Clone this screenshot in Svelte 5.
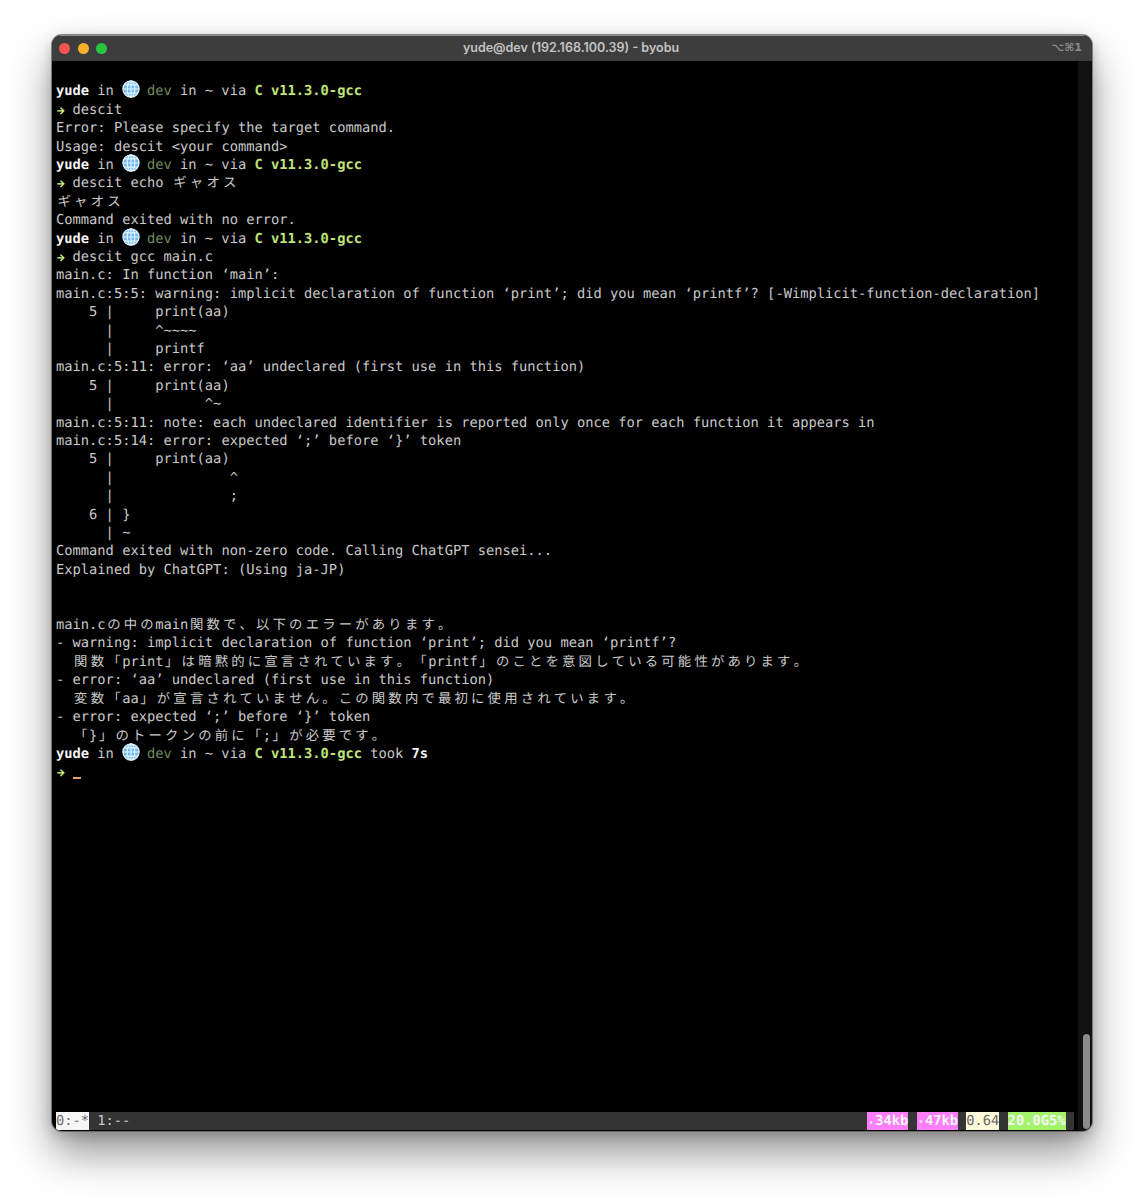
<script lang="ts">
	// '$' marks a prompt line, '$t' a prompt with the took suffix
	const lines: string[] = [
		'$',
		'> descit',
		'Error: Please specify the target command.',
		'Usage: descit <your command>',
		'$',
		'> descit echo ギャオス',
		'ギャオス',
		'Command exited with no error.',
		'$',
		'> descit gcc main.c',
		'main.c: In function ‘main’:',
		'main.c:5:5: warning: implicit declaration of function ‘print’; did you mean ‘printf’? [-Wimplicit-function-declaration]',
		'    5 |     print(aa)',
		'      |     ^~~~~',
		'      |     printf',
		'main.c:5:11: error: ‘aa’ undeclared (first use in this function)',
		'    5 |     print(aa)',
		'      |           ^~',
		'main.c:5:11: note: each undeclared identifier is reported only once for each function it appears in',
		'main.c:5:14: error: expected ‘;’ before ‘}’ token',
		'    5 |     print(aa)',
		'      |              ^',
		'      |              ;',
		'    6 | }',
		'      | ~',
		'Command exited with non-zero code. Calling ChatGPT sensei...',
		'Explained by ChatGPT: (Using ja-JP)',
		'',
		'',
		'main.cの中のmain関数で、以下のエラーがあります。',
		'- warning: implicit declaration of function ‘print’; did you mean ‘printf’?',
		'  関数「print」は暗黙的に宣言されています。「printf」のことを意図している可能性があります。',
		'- error: ‘aa’ undeclared (first use in this function)',
		'  変数「aa」が宣言されていません。この関数内で最初に使用されています。',
		'- error: expected ‘;’ before ‘}’ token',
		'  「}」のトークンの前に「;」が必要です。',
		'$t',
		'>_'
	];

	const wide = /([\u3000-\u30ff\u4e00-\u9fff]+)/;

	function runs(text: string) {
		return text.split(wide).filter(Boolean).map((t) => ({ t, wide: wide.test(t) }));
	}
</script>

<main class="page">
	<section class="window">
		<header class="titlebar">
			<div class="lights">
				<span class="light red"></span>
				<span class="light yellow"></span>
				<span class="light green"></span>
			</div>
			<div class="title">yude@dev (192.168.100.39) - byobu</div>
			<div class="shortcut">⌥⌘1</div>
		</header>
		<div class="body">
			<div class="terminal">
				<div class="output">
					{#each lines as line}
						{#if line === '$' || line === '$t'}
							<div class="line">
								<b class="user">yude</b> in <svg class="globe" viewBox="0 0 20 20" aria-hidden="true">
									<circle cx="10" cy="10" r="9.2" fill="#6fbaf0" />
									<g fill="none" stroke="#e2f3fe" stroke-width="1.3">
										<circle cx="10" cy="10" r="9" />
										<ellipse cx="10" cy="10" rx="4.2" ry="9" />
										<path d="M10 1v18M1 10h18M2.4 5.4h15.2M2.4 14.6h15.2" />
									</g>
								</svg> <span class="dev">dev</span> in ~ via <b class="lang">C v11.3.0-gcc</b>{#if line === '$t'}{' '}took <b class="user">7s</b>{/if}
							</div>
						{:else if line === '>_'}
							<div class="line"><b class="arrow">→</b> <span class="cursor">&nbsp;</span></div>
						{:else if line.startsWith('> ')}
							<div class="line"><b class="arrow">→</b> {#each runs(line.slice(2)) as r}<span class:wide={r.wide}>{r.t}</span>{/each}</div>
						{:else}
							<div class="line">{#each runs(line) as r}<span class:wide={r.wide}>{r.t}</span>{/each}</div>
						{/if}
					{/each}
				</div>
				<footer class="status">
					<span class="tab current">0:-*</span>
					<span class="tab">1:--</span>
					<span class="spacer"></span>
					<span class="cell pink"><small>▴</small>34kb</span>
					<span class="cell pink"><small>▾</small>47kb</span>
					<span class="cell cream">0.64</span>
					<span class="cell lime">20.0G5%</span>
				</footer>
			</div>
			<aside class="gutter">
				<div class="thumb"></div>
			</aside>
		</div>
	</section>
</main>

<style>
	:global(body) {
		background: #fff;
	}

	.page {
		height: 1200px;
		box-sizing: border-box;
		padding: 35px 52px 69px;
	}

	.window {
		height: 100%;
		display: flex;
		flex-direction: column;
		border-radius: 10px;
		overflow: hidden;
		background: #000;
		box-shadow: 0 0 0 1px rgba(90, 90, 90, 0.7), 0 22px 42px rgba(0, 0, 0, 0.42), 0 4px 14px rgba(0, 0, 0, 0.2);
	}

	.titlebar {
		height: 26px;
		flex: none;
		display: flex;
		align-items: center;
		position: relative;
		background: #3e3d3e;
		border-top: 1px solid #8a8a8a;
		box-sizing: border-box;
		font-family: Inter, "Liberation Sans", sans-serif;
	}

	.lights {
		display: flex;
		gap: 7.5px;
		padding-left: 7px;
	}

	.light {
		width: 11px;
		height: 11px;
		border-radius: 50%;
	}

	.red {
		background: #f2544e;
	}

	.yellow {
		background: #f6b02c;
	}

	.green {
		background: #29c440;
	}

	.title {
		position: absolute;
		left: 0;
		right: 2px;
		top: 4px;
		text-align: center;
		font-size: 12.5px;
		font-weight: 600;
		color: #c4c4c4;
	}

	.shortcut {
		margin-left: auto;
		padding-right: 10px;
		margin-top: -2px;
		font-family: "DejaVu Sans", sans-serif;
		font-size: 11px;
		font-weight: 700;
		color: #8a8a8a;
	}

	.body {
		flex: 1;
		min-height: 0;
		display: flex;
	}

	.terminal {
		flex: 1;
		min-width: 0;
		display: flex;
		flex-direction: column;
		padding: 21.3px 4.5px 1px 4px;
		font-family: "DejaVu Sans Mono", "Noto Sans CJK JP", monospace;
		font-size: 13.74px;
		text-rendering: geometricPrecision;
		color: #c9c9c9;
	}

	.output {
		flex: 1;
	}

	.line {
		height: 18.42px;
		line-height: 18.42px;
		white-space: pre;
	}

	.wide {
		display: inline-block;
		height: 14px;
		line-height: 14px;
		font-family: "Noto Sans CJK JP", sans-serif;
		font-size: 13.4px;
		letter-spacing: 3.15px;
		padding-left: 1.55px;
		margin-right: -1.55px;
		text-spacing-trim: space-all;
		font-kerning: none;
	}

	.user {
		color: #f4f4f4;
		font-weight: 700;
	}

	.arrow {
		color: #d4f28a;
		font-family: Inter, "DejaVu Sans", sans-serif;
		font-size: 10px;
		font-weight: 800;
		line-height: 0;
		display: inline-block;
		width: 8.27px;
	}

	.dev {
		color: #6e8c5e;
	}

	.lang {
		color: #c0e478;
		font-weight: 700;
	}

	.globe {
		width: 18px;
		height: 18px;
		margin: -5px -1.6px -5px 0.1px;
		vertical-align: 1.9px;
	}

	.cursor {
		display: inline-block;
		width: 8.27px;
		height: 14px;
		line-height: 14px;
		vertical-align: top;
		margin-top: 2px;
		background: linear-gradient(transparent 12px, #f0a070 12px, #f0a070 14px);
	}

	.status {
		height: 18px;
		flex: none;
		display: flex;
		gap: 8.27px;
		padding-right: 8px;
		line-height: 18px;
		background: #343434;
		white-space: pre;
	}

	.spacer {
		flex: 1;
	}

	.tab.current {
		background: #f6f6f6;
		color: #6c6c6c;
		width: 33px;
	}

	.cell {
		color: #f4f4f4;
		font-weight: 700;
	}

	.cell small {
		font-size: 8px;
		vertical-align: 1px;
		display: inline-block;
		width: 8.27px;
		text-align: center;
	}

	.pink {
		background: #fb7efb;
	}

	.cream {
		background: #fdfadb;
		color: #666;
		font-weight: 400;
	}

	.lime {
		background: #a5f36c;
	}

	.gutter {
		width: 14px;
		flex: none;
		display: flex;
		flex-direction: column;
		justify-content: flex-end;
		align-items: flex-end;
		padding: 0 2px 2px 0;
		box-sizing: border-box;
		background: #111;
	}

	.thumb {
		width: 7.5px;
		height: 95px;
		border-radius: 4px;
		background: #8b8b8b;
	}
</style>
